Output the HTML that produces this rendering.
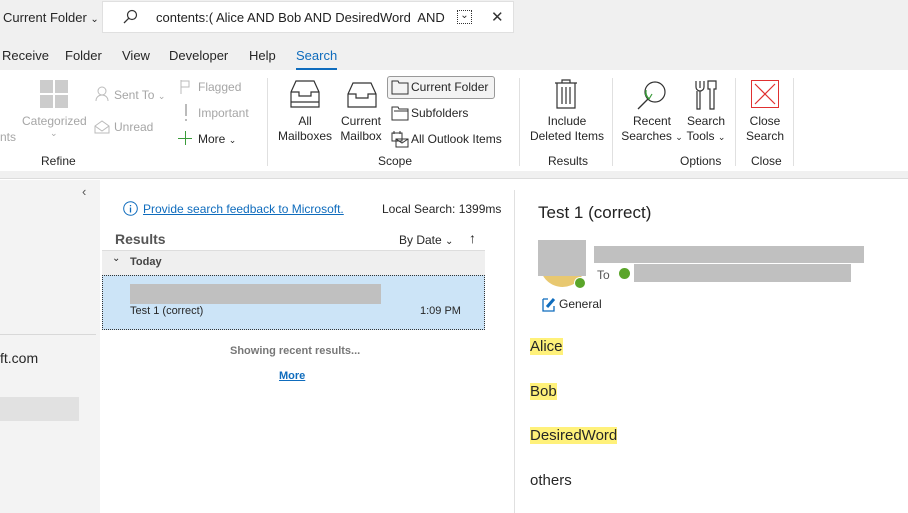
<!DOCTYPE html>
<html><head><meta charset="utf-8"><style>
*{box-sizing:border-box;margin:0;padding:0}
body{width:908px;height:513px;overflow:hidden;background:#fff;font-family:"Segoe UI","Liberation Sans",sans-serif;font-size:12px;color:#262626;position:relative}
.a{position:absolute;white-space:nowrap}
.g{color:#a6a6a6}
.c{text-align:center}
svg{position:absolute}
</style></head><body>
<div class="a" style="left:0;top:0;width:908px;height:70px;background:#f0f0f0"></div>
<div class="a" style="left:3px;top:10px;font-size:13px">Current Folder <span style="font-size:10px">&#8964;</span></div>
<div class="a" style="left:102px;top:1px;width:412px;height:32px;background:#fff;border:1px solid #e0e0e0"></div>
<svg style="left:122px;top:9px" width="16" height="16" viewBox="0 0 16 16"><circle cx="10" cy="6" r="4.5" fill="none" stroke="#333" stroke-width="1.2"/><path d="M7 9L2 14" stroke="#333" stroke-width="1.3"/></svg>
<div class="a" style="left:156px;top:10px;font-size:13px;color:#222">contents:( Alice AND Bob AND DesiredWord&nbsp; AND</div>
<div class="a" style="left:457px;top:10px;width:15px;height:14px;border:1px dotted #333;font-size:10px;text-align:center;line-height:10px">&#8964;</div>
<div class="a" style="left:491px;top:8px;font-size:15px;color:#333">✕</div>
<div class="a" style="left:2px;top:48px;font-size:13px">Receive</div>
<div class="a" style="left:65px;top:48px;font-size:13px">Folder</div>
<div class="a" style="left:122px;top:48px;font-size:13px">View</div>
<div class="a" style="left:169px;top:48px;font-size:13px">Developer</div>
<div class="a" style="left:249px;top:48px;font-size:13px">Help</div>
<div class="a" style="left:296px;top:48px;font-size:13px;color:#0f6cbd">Search</div>
<div class="a" style="left:296px;top:68px;width:41px;height:2px;background:#0f6cbd"></div>
<div class="a" style="left:0;top:71px;width:908px;height:100px;background:#fff"></div>
<div class="a" style="left:0;top:171px;width:908px;height:8px;background:#f0f0f0;border-bottom:1px solid #dcdcdc"></div>
<!-- Refine -->
<div class="a" style="left:40px;top:80px;width:28px;height:28px;background:linear-gradient(#ccc,#ccc) 0 0/13px 13px no-repeat,linear-gradient(#ccc,#ccc) 15px 0/13px 13px no-repeat,linear-gradient(#ccc,#ccc) 0 15px/13px 13px no-repeat,linear-gradient(#ccc,#ccc) 15px 15px/13px 13px no-repeat"></div>
<div class="a g" style="left:22px;top:114px">Categorized</div>
<div class="a g" style="left:50px;top:128px;font-size:9px">&#8964;</div>
<div class="a g" style="left:0;top:130px">nts</div>
<div class="a g" style="left:114px;top:88px">Sent To <span style="font-size:9px">&#8964;</span></div>
<svg style="left:95px;top:86px" width="14" height="16"><circle cx="7" cy="5" r="4" fill="none" stroke="#bbb"/><path d="M1 15c0-4 3-6 6-6s6 2 6 6" fill="none" stroke="#bbb"/></svg>
<div class="a g" style="left:114px;top:120px">Unread</div>
<svg style="left:94px;top:120px" width="16" height="14"><path d="M1 6l7-5 7 5v7H1zM1 6l7 5 7-5" fill="none" stroke="#bbb"/></svg>
<div class="a g" style="left:198px;top:80px">Flagged</div>
<svg style="left:180px;top:80px" width="12" height="14"><path d="M1 0v14M1 1h8v6H1" fill="none" stroke="#bbb"/></svg>
<div class="a g" style="left:198px;top:106px">Important</div>
<div class="a" style="left:185px;top:104px;width:2px;height:12px;background:#bbb"></div>
<div class="a" style="left:185px;top:119px;width:2px;height:2px;background:#bbb"></div>
<div class="a" style="left:198px;top:132px">More <span style="font-size:9px">&#8964;</span></div>
<div class="a" style="left:178px;top:138px;width:14px;height:1px;background:#3a9b3a"></div>
<div class="a" style="left:185px;top:131px;width:1px;height:14px;background:#3a9b3a"></div>
<div class="a" style="left:41px;top:154px">Refine</div>
<div class="a" style="left:267px;top:78px;width:1px;height:88px;background:#e0e0e0"></div>
<!-- Scope -->
<svg style="left:290px;top:80px" width="30" height="28"><path d="M1 12l5-11h18l5 11v15H1zM1 12h8v4h12v-4h8M1 22h28" fill="none" stroke="#333" stroke-width="1.2"/></svg>
<div class="a c" style="left:276px;top:114px;width:58px;line-height:15px">All<br>Mailboxes</div>
<svg style="left:347px;top:82px" width="30" height="26"><path d="M1 12l5-11h18l5 11v13H1zM1 12h8v4h12v-4h8" fill="none" stroke="#333" stroke-width="1.2"/></svg>
<div class="a c" style="left:337px;top:114px;width:48px;line-height:15px">Current<br>Mailbox</div>
<div class="a" style="left:387px;top:76px;width:108px;height:23px;border:1px solid #999;border-radius:3px;background:#f3f3f3"></div>
<svg style="left:391px;top:80px" width="18" height="15"><path d="M1 1h6l1 2h9v11H1z" fill="none" stroke="#333"/></svg>
<div class="a" style="left:411px;top:80px">Current Folder</div>
<svg style="left:391px;top:106px" width="18" height="15"><path d="M1 1h6l1 2h9v11H1zM3 5h14" fill="none" stroke="#333"/></svg>
<div class="a" style="left:411px;top:106px">Subfolders</div>
<svg style="left:391px;top:130px" width="18" height="18"><path d="M1 3h10v8H1zM3 1v3M9 1v3M5 9h12v8H5zM5 9l6 4 6-4" fill="none" stroke="#333"/></svg>
<div class="a" style="left:411px;top:132px">All Outlook Items</div>
<div class="a" style="left:378px;top:154px">Scope</div>
<div class="a" style="left:519px;top:78px;width:1px;height:88px;background:#e0e0e0"></div>
<!-- Results -->
<svg style="left:554px;top:79px" width="24" height="30"><path d="M1 4h22M8 4V1h8v3M3 4v25h18V4M8 8v17M12 8v17M16 8v17" fill="none" stroke="#333" stroke-width="1.2"/></svg>
<div class="a c" style="left:525px;top:114px;width:84px;line-height:15px">Include<br>Deleted Items</div>
<div class="a" style="left:548px;top:154px">Results</div>
<div class="a" style="left:612px;top:78px;width:1px;height:88px;background:#e0e0e0"></div>
<svg style="left:636px;top:80px" width="32" height="30"><circle cx="19" cy="12" r="10" fill="none" stroke="#333" stroke-width="1.2"/><path d="M12 19L2 29" stroke="#333" stroke-width="1.3"/><path d="M10 10a10 10 0 0 0 3 9" fill="none" stroke="#3a9b3a" stroke-width="1.4"/><path d="M9 14l4 5 3-5" fill="none" stroke="#3a9b3a" stroke-width="1.2"/></svg>
<div class="a c" style="left:620px;top:114px;width:64px;line-height:15px">Recent<br>Searches <span style="font-size:9px">&#8964;</span></div>
<svg style="left:694px;top:80px" width="24" height="30"><path d="M2 1v6a4 4 0 0 0 8 0V1M6 11v18h-3V11M6 1v7M14 1h8v8h-2v20h-4V9h-2z" fill="none" stroke="#333" stroke-width="1.2"/></svg>
<div class="a c" style="left:685px;top:114px;width:42px;line-height:15px">Search<br>Tools <span style="font-size:9px">&#8964;</span></div>
<div class="a" style="left:680px;top:154px">Options</div>
<div class="a" style="left:735px;top:78px;width:1px;height:88px;background:#e0e0e0"></div>
<svg style="left:751px;top:80px" width="28" height="28"><rect x="0.5" y="0.5" width="27" height="27" fill="none" stroke="#e03030"/><path d="M4 4l20 20M24 4L4 24" stroke="#e03030" stroke-width="1.2"/></svg>
<div class="a c" style="left:740px;top:114px;width:50px;line-height:15px">Close<br>Search</div>
<div class="a" style="left:751px;top:154px">Close</div>
<div class="a" style="left:793px;top:78px;width:1px;height:88px;background:#e0e0e0"></div>
<!-- left pane -->
<div class="a" style="left:0;top:180px;width:100px;height:333px;background:#f3f3f3"></div>
<div class="a" style="left:82px;top:184px;font-size:13px;color:#555">‹</div>
<div class="a" style="left:0;top:334px;width:96px;height:1px;background:#d8d8d8"></div>
<div class="a" style="left:0;top:350px;font-size:14px">ft.com</div>
<div class="a" style="left:0;top:397px;width:79px;height:24px;background:#e1e1e1"></div>
<!-- list -->
<svg style="left:123px;top:201px" width="15" height="15"><circle cx="7.5" cy="7.5" r="6.8" fill="none" stroke="#0f6cbd"/><path d="M7.5 6.5v5M7.5 4v1.3" stroke="#0f6cbd" stroke-width="1.3"/></svg>
<div class="a" style="left:143px;top:202px;color:#0f6cbd;text-decoration:underline">Provide search feedback to Microsoft.</div>
<div class="a" style="left:382px;top:202px">Local Search: 1399ms</div>
<div class="a" style="left:115px;top:231px;font-size:14px;font-weight:bold;color:#555">Results</div>
<div class="a" style="left:399px;top:233px">By Date <span style="font-size:10px">&#8964;</span></div>
<div class="a" style="left:469px;top:230px;font-size:14px">↑</div>
<div class="a" style="left:102px;top:250px;width:383px;height:25px;background:#efefef;border-top:1px solid #ddd"></div>
<div class="a" style="left:112px;top:253px;font-size:10px">&#8964;</div>
<div class="a" style="left:130px;top:256px;font-weight:bold;font-size:11px;color:#444">Today</div>
<div class="a" style="left:102px;top:275px;width:383px;height:55px;background:#cce4f7;border:1px dotted #333"></div>
<div class="a" style="left:130px;top:284px;width:251px;height:20px;background:#c0c0c0"></div>
<div class="a" style="left:130px;top:305px;font-size:11px">Test 1 (correct)</div>
<div class="a" style="left:420px;top:305px;font-size:11px">1:09 PM</div>
<div class="a" style="left:230px;top:345px;font-size:11px;font-weight:bold;color:#777">Showing recent results...</div>
<div class="a" style="left:279px;top:370px;font-size:11px;font-weight:bold;color:#0f6cbd;text-decoration:underline">More</div>
<div class="a" style="left:514px;top:190px;width:1px;height:323px;background:#e0e0e0"></div>
<!-- reading -->
<div class="a" style="left:538px;top:203px;font-size:17px;color:#222">Test 1 (correct)</div>
<div class="a" style="left:540px;top:259px;width:45px;height:28px;border-radius:0 0 23px 23px;background:#e8c870"></div>
<div class="a" style="left:538px;top:240px;width:48px;height:36px;background:#c0c0c0"></div>
<div class="a" style="left:574px;top:277px;width:12px;height:12px;border-radius:50%;background:#5aa52a;border:1.5px solid #fff"></div>
<div class="a" style="left:594px;top:246px;width:270px;height:17px;background:#c0c0c0"></div>
<div class="a" style="left:597px;top:268px;color:#555">To</div>
<div class="a" style="left:619px;top:268px;width:11px;height:11px;border-radius:50%;background:#5aa52a"></div>
<div class="a" style="left:634px;top:264px;width:217px;height:18px;background:#c0c0c0"></div>
<svg style="left:542px;top:297px" width="14" height="15"><path d="M1 2h5M1 2v12h11V9" fill="none" stroke="#0f6cbd" stroke-width="1.3"/><path d="M5 10l7-8" stroke="#0f6cbd" stroke-width="3"/></svg>
<div class="a" style="left:559px;top:297px">General</div>
<div class="a" style="left:530px;top:338px;font-size:15px;background:#fff17a">Alice</div>
<div class="a" style="left:530px;top:383px;font-size:15px;background:#fff17a">Bob</div>
<div class="a" style="left:530px;top:427px;font-size:15px;background:#fff17a">DesiredWord</div>
<div class="a" style="left:530px;top:472px;font-size:15px">others</div>
</body></html>
